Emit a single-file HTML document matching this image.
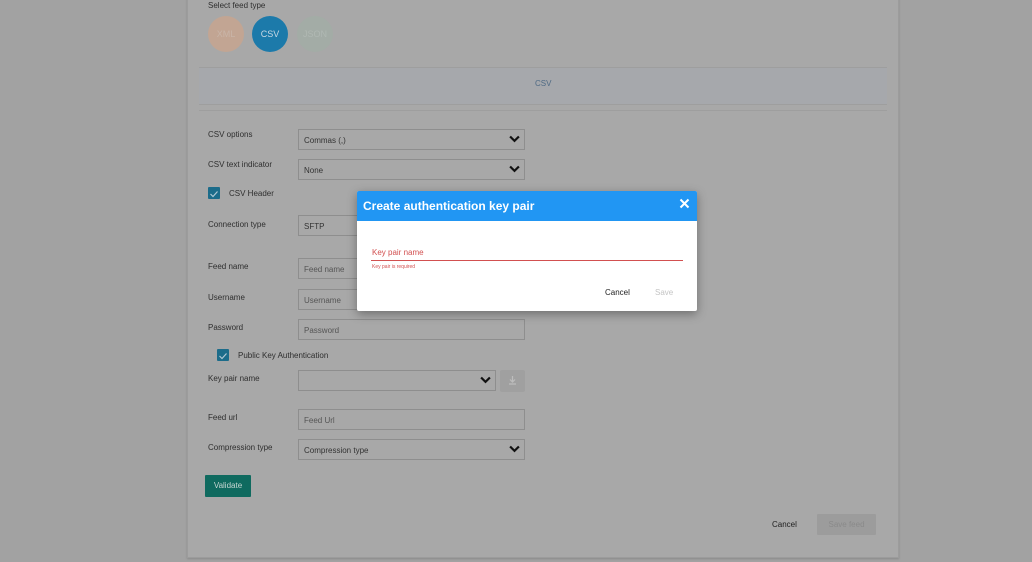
<!DOCTYPE html>
<html><head><meta charset="utf-8"><style>
*{box-sizing:border-box;margin:0;padding:0}
body{width:1032px;height:562px;overflow:hidden;background:#a2a2a2;font-family:"Liberation Sans",sans-serif;position:relative;color:#2a2a2a}
.panel{position:absolute;left:187px;top:-2px;width:712px;height:560px;background:#a8a8a8;border:1px solid #9c9c9c;box-shadow:0 1px 2px #8a8a8a}
.a{position:absolute}
.lbl{position:absolute;font-size:8px;color:#2e2e2e}
.in{position:absolute;height:21px;border:1px solid #8e8e8e;background:#a8a8a8;font-size:8px;color:#333;padding:6px 0 0 5px}
.chev{position:absolute;right:4px;top:5px}
.cb{position:absolute;width:12px;height:12px;background:#1c6c8a;border-radius:1px}
.circ{position:absolute;width:36px;height:36px;border-radius:50%;font-size:9px;color:#c9c9c9;text-align:center;line-height:36px}
</style></head><body>
<div class="panel"></div>
<div class="lbl" style="left:208px;top:1px">Select feed type</div>
<div class="circ" style="left:208px;top:16px;background:#c2a593;color:#c9b5a8">XML</div>
<div class="circ" style="left:252px;top:16px;background:#1c7aaa;color:#c8d8e4">CSV</div>
<div class="circ" style="left:297px;top:16px;background:#a3aca6;color:#b0b8b3">JSON</div>
<div class="a" style="left:199px;top:67px;width:688px;height:38px;background:#a6a8ac;border-top:1px solid #9e9e9e;border-bottom:1px solid #9e9e9e"></div>
<div class="lbl" style="left:535px;top:79px;color:#4f6a84">CSV</div>
<div class="a" style="left:199px;top:110px;width:688px;height:1px;background:#9e9e9e"></div>

<svg width="0" height="0" style="position:absolute"><defs><symbol id="ch" viewBox="0 0 10 7"><path d="M1 1.2L5 5.2L9 1.2" stroke="#111" stroke-width="2" fill="none"/></symbol></defs></svg>

<div class="lbl" style="left:208px;top:130px">CSV options</div>
<div class="in" style="left:298px;top:129px;width:227px">Commas (,)<svg class="chev" width="11" height="8"><use href="#ch"/></svg></div>
<div class="lbl" style="left:208px;top:160px">CSV text indicator</div>
<div class="in" style="left:298px;top:159px;width:227px">None<svg class="chev" width="11" height="8"><use href="#ch"/></svg></div>
<div class="cb" style="left:208px;top:187px"><svg width="12" height="12"><path d="M2.5 6l2.5 2.5 4.5-5" stroke="#b0c8d4" stroke-width="1.2" fill="none"/></svg></div>
<div class="lbl" style="left:229px;top:189px">CSV Header</div>
<div class="lbl" style="left:208px;top:220px">Connection type</div>
<div class="in" style="left:298px;top:215px;width:227px">SFTP</div>
<div class="lbl" style="left:208px;top:262px">Feed name</div>
<div class="in" style="left:298px;top:258px;width:227px;color:#555">Feed name</div>
<div class="lbl" style="left:208px;top:293px">Username</div>
<div class="in" style="left:298px;top:289px;width:227px;color:#555">Username</div>
<div class="lbl" style="left:208px;top:323px">Password</div>
<div class="in" style="left:298px;top:319px;width:227px;color:#555">Password</div>
<div class="cb" style="left:217px;top:349px"><svg width="12" height="12"><path d="M2.5 6l2.5 2.5 4.5-5" stroke="#b0c8d4" stroke-width="1.2" fill="none"/></svg></div>
<div class="lbl" style="left:238px;top:351px">Public Key Authentication</div>
<div class="lbl" style="left:208px;top:374px">Key pair name</div>
<div class="in" style="left:298px;top:370px;width:198px"><svg class="chev" width="11" height="8"><use href="#ch"/></svg></div>
<div class="a" style="left:500px;top:370px;width:25px;height:22px;background:#a0a0a0;border-radius:2px"><svg width="25" height="22"><path d="M12.5 6v6M10 9.5l2.5 2.5 2.5-2.5M9 14h7" stroke="#bdbdbd" stroke-width="1.2" fill="none"/></svg></div>
<div class="lbl" style="left:208px;top:413px">Feed url</div>
<div class="in" style="left:298px;top:409px;width:227px;color:#555">Feed Url</div>
<div class="lbl" style="left:208px;top:443px">Compression type</div>
<div class="in" style="left:298px;top:439px;width:227px">Compression type<svg class="chev" width="11" height="8"><use href="#ch"/></svg></div>
<div class="a" style="left:205px;top:475px;width:46px;height:22px;background:#0f6a5f;color:#c6d6d2;font-size:8px;text-align:center;line-height:21px;border-radius:1px">Validate</div>
<div class="lbl" style="left:772px;top:520px;color:#1e1e1e">Cancel</div>
<div class="a" style="left:817px;top:514px;width:59px;height:21px;background:#9c9c9c;color:#8a8a8a;font-size:8px;text-align:center;line-height:21px;border-radius:1px">Save feed</div>

<div class="a" style="left:357px;top:191px;width:340px;height:120px;background:#fff;border-radius:2px;box-shadow:0 3px 10px rgba(0,0,0,.35)">
<div style="height:30px;background:#2196f3;border-radius:2px 2px 0 0;color:#fff;font-weight:bold;font-size:12px;padding:8px 0 0 6px">Create authentication key pair</div>
<svg class="a" style="left:322px;top:7px" width="11" height="11"><path d="M1.5 1.5l8 8M9.5 1.5l-8 8" stroke="#fff" stroke-width="2"/></svg>
<div class="a" style="left:15px;top:57px;font-size:8px;color:#d25050">Key pair name</div>
<div class="a" style="left:14px;top:69px;width:312px;height:1px;background:#d25050"></div>
<div class="a" style="left:15px;top:73px;font-size:5px;color:#d25050">Key pair is required</div>
<div class="a" style="left:248px;top:97px;font-size:8px;color:#222">Cancel</div>
<div class="a" style="left:298px;top:97px;font-size:8px;color:#c4c4c4">Save</div>
</div>
</body></html>
